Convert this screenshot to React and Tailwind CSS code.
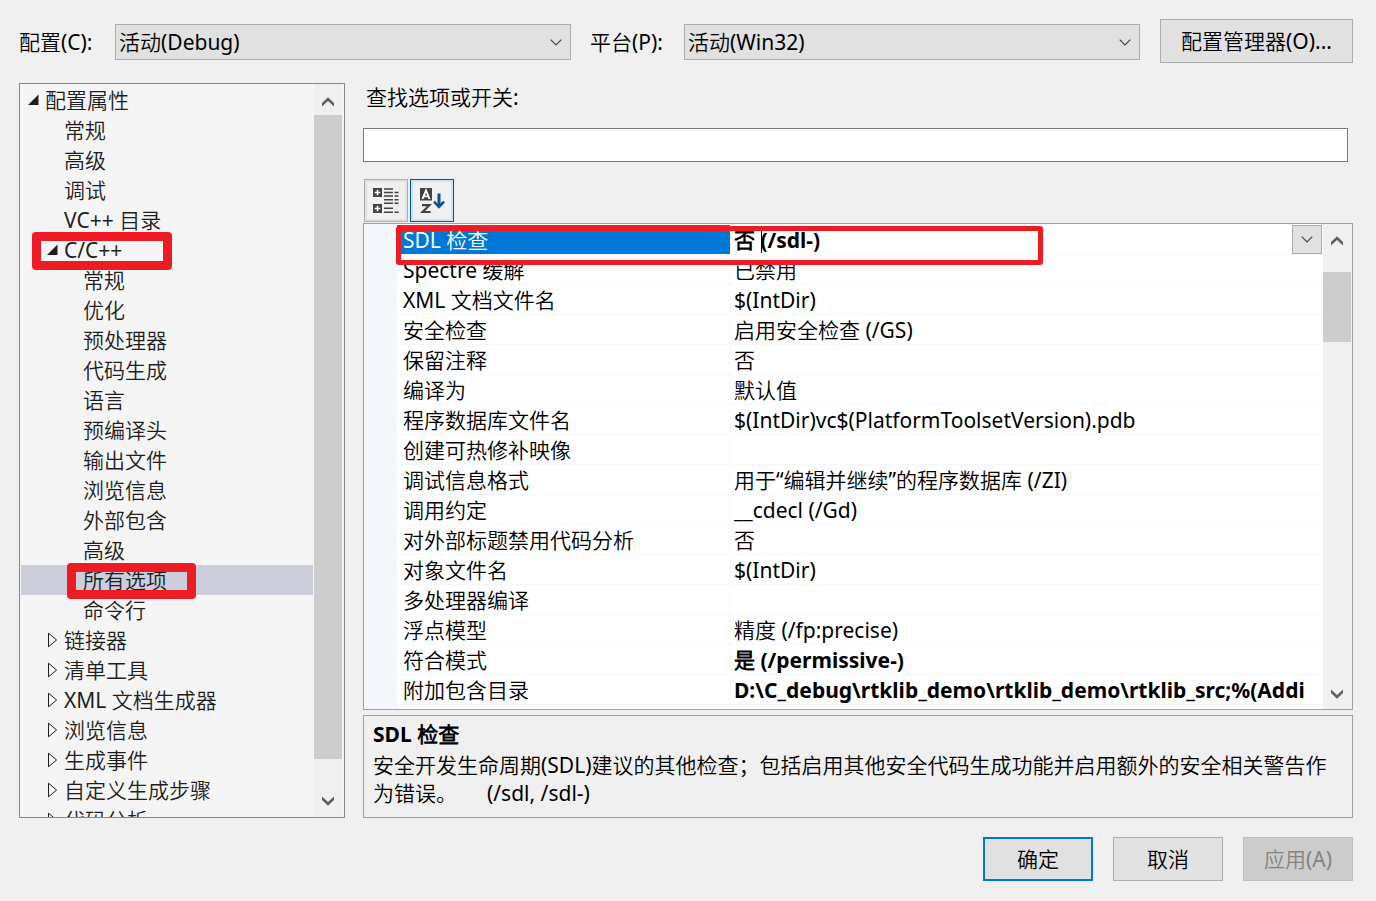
import React from "react";

const TREE = [
  { text: "配置属性", level: 0, state: "open" },
  { text: "常规", level: 1 },
  { text: "高级", level: 1 },
  { text: "调试", level: 1 },
  { text: "VC++ 目录", level: 1 },
  { text: "C/C++", level: 1, state: "open", mark: "parent" },
  { text: "常规", level: 2 },
  { text: "优化", level: 2 },
  { text: "预处理器", level: 2 },
  { text: "代码生成", level: 2 },
  { text: "语言", level: 2 },
  { text: "预编译头", level: 2 },
  { text: "输出文件", level: 2 },
  { text: "浏览信息", level: 2 },
  { text: "外部包含", level: 2 },
  { text: "高级", level: 2 },
  { text: "所有选项", level: 2, selected: true, mark: "leaf" },
  { text: "命令行", level: 2 },
  { text: "链接器", level: 1, state: "closed" },
  { text: "清单工具", level: 1, state: "closed" },
  { text: "XML 文档生成器", level: 1, state: "closed" },
  { text: "浏览信息", level: 1, state: "closed" },
  { text: "生成事件", level: 1, state: "closed" },
  { text: "自定义生成步骤", level: 1, state: "closed" },
  { text: "代码分析", level: 1, state: "closed" },
];

const PROPS = [
  ["Spectre 缓解", "已禁用"],
  ["XML 文档文件名", "$(IntDir)"],
  ["安全检查", "启用安全检查 (/GS)"],
  ["保留注释", "否"],
  ["编译为", "默认值"],
  ["程序数据库文件名", "$(IntDir)vc$(PlatformToolsetVersion).pdb"],
  ["创建可热修补映像", ""],
  ["调试信息格式", "用于“编辑并继续”的程序数据库 (/ZI)"],
  ["调用约定", "__cdecl (/Gd)"],
  ["对外部标题禁用代码分析", "否"],
  ["对象文件名", "$(IntDir)"],
  ["多处理器编译", ""],
  ["浮点模型", "精度 (/fp:precise)"],
  ["符合模式", "是 (/permissive-)", true],
  ["附加包含目录", "D:\\C_debug\\rtklib_demo\\rtklib_demo\\rtklib_src;%(Addi", true],
];

const LEVEL_PADDING = ["pl-[7px]", "pl-[26px]", "pl-[45px]"];

function ThinChevron() {
  return (
    <svg width="12" height="7" viewBox="0 0 12 7" fill="none" stroke="#444" strokeWidth="1.2" aria-hidden="true">
      <path d="M0.7 0.7 L6 6 L11.3 0.7" />
    </svg>
  );
}

function ScrollArrow({ down }) {
  return (
    <svg width="12" height="10" viewBox="0 0 12 10" fill="#606060" aria-hidden="true">
      <path d={down ? "M0 0.5 L6 6 L12 0.5 V4 L6 9.7 L0 4 Z" : "M0 9.5 L6 4 L12 9.5 V6 L6 0.3 L0 6 Z"} />
    </svg>
  );
}

function Expander({ state }) {
  if (state === "open") {
    return (
      <svg width="12" height="16" viewBox="0 0 12 16" fill="#1e1e1e" aria-hidden="true">
        <path d="M10.5 2.5 V13 H0 Z" />
      </svg>
    );
  }
  if (state === "closed") {
    return (
      <svg width="12" height="16" viewBox="0 0 12 16" fill="none" stroke="#1e1e1e" aria-hidden="true">
        <path d="M1.5 1.2 V14.8 L9.6 8 Z" />
      </svg>
    );
  }
  return null;
}

function Combo({ id, value }) {
  return (
    <div className="relative min-w-0">
      <select id={id} className="block h-9 w-full appearance-none border border-[#adadad] bg-[#e1e1e1] pl-[3px] pr-8 outline-none">
        <option>{value}</option>
      </select>
      <span className="pointer-events-none absolute inset-y-0 right-[9px] flex items-center">
        <ThinChevron />
      </span>
    </div>
  );
}

function PushButton({ children, className }) {
  return (
    <button type="button" className={`h-11 bg-[#e1e1e1] whitespace-nowrap ${className}`}>{children}</button>
  );
}

function Tree() {
  return (
    <nav aria-label="配置属性" className="flex w-[326px] shrink-0 overflow-hidden border border-[#828790] bg-[#f5f5f5] text-[#1e1e1e]">
      <ul role="tree" className="min-w-0 flex-1 overflow-hidden pt-px pl-px">
        {TREE.map((item, i) => (
          <li
            key={i}
            role="treeitem"
            aria-selected={!!item.selected}
            className={`relative flex h-[30px] items-center ${LEVEL_PADDING[item.level]} ${item.selected ? "bg-[#cccedb]" : ""}`}
          >
            <span className="flex w-[17px] shrink-0"><Expander state={item.state} /></span>
            <span className="whitespace-nowrap">{item.text}</span>
            {item.mark === "parent" && (
              <span className="absolute -top-[3px] left-[11px] h-[38px] w-[140px] rounded-[4px] border-[9px] border-[#ed1c24]" />
            )}
            {item.mark === "leaf" && (
              <span className="absolute -top-[2px] left-[46px] h-9 w-[129px] rounded-[4px] border-[9px] border-[#ed1c24]" />
            )}
          </li>
        ))}
      </ul>
      <div className="ml-px mr-0.5 flex w-7 shrink-0 flex-col bg-[#f0f0f0]">
        <button type="button" aria-label="向上滚动" className="flex h-[31px] items-center justify-center pt-1"><ScrollArrow /></button>
        <div className="flex-1 bg-[#cdcdcd]" />
        <button type="button" aria-label="向下滚动" className="flex h-[58px] items-end justify-center pb-[11px]"><ScrollArrow down /></button>
      </div>
    </nav>
  );
}

function Toolbar() {
  return (
    <div className="mt-[17px] ml-px flex gap-0.5">
      <button type="button" aria-label="按分类排列" className="flex h-[43px] w-11 items-center justify-center border border-[#adadad] bg-[#f0f0f0] shadow-[inset_0_0_0_2px_#e1e1e1]">
        <svg width="28" height="28" viewBox="0 0 28 28" aria-hidden="true">
          <path fill="#424242" d="M1 1h9v9H1z M1 17h9v9H1z" />
          <path stroke="#fff" strokeWidth="1.6" d="M5.5 2.7v5.6M2.7 5.5h5.6M5.5 18.7v5.6M2.7 21.5h5.6" />
          <path stroke="#424242" strokeWidth="1.4" d="M12 2h9M12 5.5h9M12 9h9M12 12.7h9M12 16.2h9M12 21.3h9M12 25.3h9M22.5 5.5h4M22.5 9h4M22.5 12.7h4M22.5 16.2h4M22.5 25.3h4" />
        </svg>
      </button>
      <button type="button" aria-label="按字母排序" aria-pressed="true" className="flex h-[43px] w-11 items-center justify-center border border-[#00539c] bg-[#f0f0f0] shadow-[inset_0_0_0_2px_#cce4f7]">
        <svg width="28" height="28" viewBox="0 0 28 28" fill="none" aria-hidden="true">
          <path fill="#424242" d="M2 1h12v12.5H2z" />
          <path stroke="#fff" strokeWidth="1.9" d="M4.4 12 L8 3.4 L11.6 12 M5.6 9.4h4.8" />
          <path stroke="#424242" strokeWidth="2.2" d="M4 18.2h7.4 L4.6 25 H12.6" />
          <path stroke="#00539c" strokeWidth="3" d="M21 6.5v13" />
          <path stroke="#00539c" strokeWidth="2.6" d="M16 14.6 L21 19.8 L26 14.6" />
        </svg>
      </button>
    </div>
  );
}

function PropertyGrid() {
  return (
    <div className="relative mt-px flex min-h-0 flex-1 border border-[#a0a0a0] bg-white">
      <div className="min-w-0 flex-1 overflow-hidden bg-linear-to-r from-[#f4f7fc] from-[33px] to-white to-[33px] pt-px">
        <table className="w-full table-fixed border-separate border-spacing-0">
          <colgroup>
            <col className="w-[33px]" />
            <col className="w-[334px]" />
            <col />
          </colgroup>
          <tbody>
            <tr className="h-[30px]">
              <td className="p-0" />
              <th scope="row" className="border-r border-b border-[#f4f7fc] bg-[#0078d7] bg-clip-padding p-0 pl-1.5 text-left font-normal text-white">
                <div className="h-[29px] leading-[30px]">SDL 检查</div>
              </th>
              <td className="border-b border-[#f4f7fc] p-0 pl-[3px]">
                <div className="relative flex h-[29px]">
                  <input aria-label="SDL 检查" defaultValue="否 (/sdl-)" className="h-[29px] min-w-0 flex-1 pb-0.5 font-bold outline-none" />
                  <span className="absolute top-1 left-[27px] h-6 w-px bg-black" />
                  <button type="button" aria-label="打开选项列表" className="mr-px flex h-[29px] w-[30px] items-center justify-center border border-[#adadad] bg-[#e1e1e1]">
                    <ThinChevron />
                  </button>
                </div>
              </td>
            </tr>
            {PROPS.map(([name, value, bold]) => (
              <tr key={name} className="h-[30px]">
                <td className="p-0" />
                <th scope="row" className="border-r border-b border-[#f4f7fc] p-0 pl-1.5 text-left font-normal">
                  <div className="h-[29px] leading-[30px] whitespace-nowrap">{name}</div>
                </th>
                <td className={`border-b border-[#f4f7fc] p-0 pl-[3px] ${bold ? "font-bold" : ""}`}>
                  <div className="h-[29px] overflow-hidden leading-[30px] whitespace-nowrap">{value}</div>
                </td>
              </tr>
            ))}
          </tbody>
        </table>
      </div>
      <div className="flex w-[29px] shrink-0 flex-col bg-[#f0f0f0] pr-px">
        <button type="button" aria-label="向上滚动" className="flex h-12 items-start justify-center pt-3"><ScrollArrow /></button>
        <div className="h-[70px] bg-[#cdcdcd]" />
        <div className="flex-1" />
        <button type="button" aria-label="向下滚动" className="flex h-7 items-end justify-center pb-2.5"><ScrollArrow down /></button>
      </div>
      <span className="pointer-events-none absolute top-0.5 left-8 h-[39px] w-[647px] rounded-[3px] border-[5px] border-[#ed1c24]" />
    </div>
  );
}

export default function App() {
  return (
    <div className="flex h-screen min-h-[600px] flex-col bg-[#f0f0f0] pt-[19px] pr-[23px] pb-5 pl-[19px] font-['Noto_Sans','Noto_Sans_CJK_SC_DemiLight','Noto_Sans_CJK_SC',sans-serif] text-[21px] leading-7 text-black">
      <header className="flex items-center">
        <div className="grid min-w-0 flex-1 grid-cols-[96px_1fr_113px_1fr] items-center pt-0.5">
          <label htmlFor="configuration" className="whitespace-nowrap">配置(C):</label>
          <Combo id="configuration" value="活动(Debug)" />
          <label htmlFor="platform" className="pl-[19px] whitespace-nowrap">平台(P):</label>
          <Combo id="platform" value="活动(Win32)" />
        </div>
        <PushButton className="ml-5 w-[193px] border border-[#adadad]">配置管理器(O)...</PushButton>
      </header>

      <main className="mt-5 flex min-h-0 flex-1 gap-[18px]">
        <Tree />
        <section className="flex min-w-0 flex-1 flex-col">
          <label htmlFor="search" className="h-[30px] pl-[3px] leading-7">查找选项或开关:</label>
          <div className="mt-[15px] pr-[5px]">
            <input id="search" type="text" className="block h-[34px] w-full border border-[#7a7a7a] bg-white px-1 outline-none" />
          </div>
          <Toolbar />
          <PropertyGrid />
          <div className="mt-[5px] h-[103px] shrink-0 border border-[#a0a0a0] px-[9px] pt-1">
            <h2 className="font-bold">SDL 检查</h2>
            <p className="mt-[3px]">安全开发生命周期(SDL)建议的其他检查；包括启用其他安全代码生成功能并启用额外的安全相关警告作为错误。<span className="inline-block pl-[30px]">(/sdl, /sdl-)</span></p>
          </div>
        </section>
      </main>

      <footer className="mt-[19px] flex justify-end gap-5">
        <PushButton className="w-[110px] border-2 border-[#0078d7]">确定</PushButton>
        <PushButton className="w-[110px] border border-[#adadad]">取消</PushButton>
        <button type="button" disabled className="h-11 w-[110px] border border-[#bfbfbf] bg-[#cccccc] whitespace-nowrap text-[#838383]">应用(A)</button>
      </footer>
    </div>
  );
}
